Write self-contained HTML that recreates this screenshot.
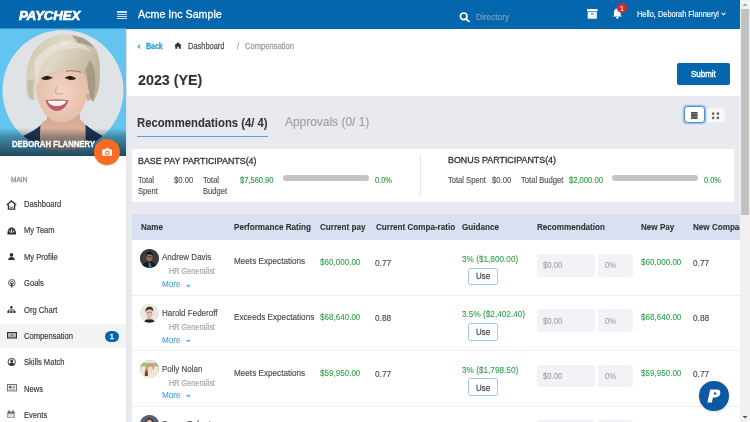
<!DOCTYPE html><html><head><meta charset="utf-8"><style>
html,body{margin:0;padding:0;width:750px;height:422px;overflow:hidden;background:#fff;font-family:"Liberation Sans",sans-serif}
.t{position:absolute;white-space:nowrap;line-height:1;-webkit-text-stroke:0.25px currentColor;will-change:transform}
.r{position:absolute}
</style></head><body>
<div class="r" style="left:126px;top:28px;width:614.00px;height:67.50px;background:#ffffff;"></div>
<div class="r" style="left:126px;top:95.5px;width:614.00px;height:326.50px;background:#e9eaf0;"></div>
<div class="r" style="left:0px;top:28px;width:126.00px;height:394.00px;background:#ffffff;"></div>
<div class="r" style="left:125.8px;top:28px;width:0.80px;height:394.00px;background:#e2e3e8;"></div>
<div class="r" style="left:0px;top:0px;width:740.00px;height:28.80px;background:#0467ae;"></div>
<div class="t" style="left:19.00px;top:8.83px;font-size:13.2px;color:#fff;font-weight:bold;font-style:italic;letter-spacing:-0.1px;-webkit-text-stroke:0.7px #fff;">PAYCHEX</div>
<div class="r" style="left:116.5px;top:10.5px;width:10.00px;height:1.00px;background:#d3e1ef;"></div>
<div class="r" style="left:116.5px;top:12.3px;width:10.00px;height:1.00px;background:#d3e1ef;"></div>
<div class="r" style="left:116.5px;top:14.1px;width:10.00px;height:1.00px;background:#d3e1ef;"></div>
<div class="r" style="left:116.5px;top:15.9px;width:10.00px;height:1.00px;background:#d3e1ef;"></div>
<div class="r" style="left:116.5px;top:17.7px;width:10.00px;height:1.00px;background:#d3e1ef;"></div>
<div class="t" style="left:138.30px;top:8.64px;font-size:10.7px;color:#fff;font-weight:normal;transform:scaleY(1.1);transform-origin:0 9.06px;">Acme Inc Sample</div>
<svg class="r" style="left:459px;top:12px" width="12" height="10" viewBox="0 0 12 10"><circle cx="4.7" cy="4.3" r="3.3" fill="none" stroke="#fff" stroke-width="1.7"/><path d="M7 6.8 L10 9.6" stroke="#fff" stroke-width="1.9" stroke-linecap="round"/></svg>
<div class="t" style="left:476.00px;top:13.82px;font-size:8.25px;color:#7fa2c6;font-weight:normal;transform:scaleY(1.1);transform-origin:0 6.98px;-webkit-text-stroke:0.1px currentColor;">Directory</div>
<div class="r" style="left:459.6px;top:26px;width:115.40px;height:0.60px;background:#1b6db3;"></div>
<svg class="r" style="left:586.5px;top:9px" width="11" height="10" viewBox="0 0 11 10"><rect x="0" y="0" width="10.5" height="2.4" fill="#fff"/><rect x="0.7" y="3.1" width="9.1" height="6.6" fill="#fff"/><rect x="3.8" y="4.4" width="3" height="1" fill="#0467ae"/></svg>
<svg class="r" style="left:611.5px;top:8px" width="11" height="11" viewBox="0 0 11 11"><path d="M5.3 0.5 C3 0.5 2 2.5 2 4.5 L2 7 L0.6 8.6 L10 8.6 L8.6 7 L8.6 4.5 C8.6 2.5 7.6 0.5 5.3 0.5Z" fill="#fff"/><circle cx="5.3" cy="9.6" r="1.2" fill="#fff"/></svg>
<div class="r" style="left:617.3px;top:3.2px;width:10px;height:10px;border-radius:50%;background:#d42a2a"></div>
<div class="t" style="left:620.40px;top:5.47px;font-size:7px;color:#fff;font-weight:normal;transform:scaleY(1.1);transform-origin:0 5.93px;-webkit-text-stroke:0.1px currentColor;">1</div>
<div class="t" style="left:636.50px;top:11.24px;font-size:7.4px;color:#fff;font-weight:normal;transform:scaleY(1.1);transform-origin:0 6.26px;-webkit-text-stroke:0.12px currentColor;">Hello, Deborah Flannery!</div>
<svg class="r" style="left:721.2px;top:12.1px" width="5" height="4" viewBox="0 0 5 4"><path d="M0.6 0.9 L2.5 2.8 L4.4 0.9" fill="none" stroke="#fff" stroke-width="1.1"/></svg>
<svg class="r" style="left:0;top:0" width="126" height="156" viewBox="0 0 126 156">
<defs>
<clipPath id="pc"><circle cx="63" cy="90.5" r="60.5"/></clipPath>
<linearGradient id="pg" x1="0" y1="0" x2="0" y2="1"><stop offset="0" stop-color="#07202c" stop-opacity="0"/><stop offset="0.3" stop-color="#07202c" stop-opacity="0.35"/><stop offset="1" stop-color="#07202c" stop-opacity="0.75"/></linearGradient>
<radialGradient id="face" cx="0.5" cy="0.5" r="0.6"><stop offset="0" stop-color="#f1d5c4"/><stop offset="0.8" stop-color="#e6c0ab"/><stop offset="1" stop-color="#d9ad96"/></radialGradient>
<linearGradient id="hair" x1="0" y1="0" x2="1" y2="0.5"><stop offset="0" stop-color="#cdc1aa"/><stop offset="0.45" stop-color="#e0d7c6"/><stop offset="1" stop-color="#bfb29a"/></linearGradient>
<linearGradient id="skin2" x1="0" y1="0" x2="0" y2="1"><stop offset="0" stop-color="#c99c82"/><stop offset="0.5" stop-color="#ddb49d"/><stop offset="1" stop-color="#e6c0aa"/></linearGradient>
</defs>
<rect x="0" y="28.5" width="126" height="127.5" fill="#63c4ef"/>
<circle cx="63" cy="90.5" r="60.5" fill="#dfe3e6"/>
<g clip-path="url(#pc)">
 <path d="M10 160 L13 146 C15 140 19 137 24 135.5 C31 132 36.5 129 41 125 L86 125 C90.5 129 96 132 102 135.5 C107 137 111 140 113 146 L116 160Z" fill="#1e3457"/>
 <path d="M47 104 L79 104 L80 119 C82 121 84.5 123 85.5 125.5 C86 135 85 150 84 160 L41 160 C40 150 39.5 135 40.5 125.5 C41.5 123 44 121 47 119Z" fill="url(#skin2)"/>
 <path d="M36 86 C36 70 46.5 62 62 62 C77.5 62 88 70 88 86 C88 106 77.5 122.5 61 122.5 C46 122.5 36 104 36 86Z" fill="url(#face)"/>
 <ellipse cx="88.5" cy="97" rx="2.2" ry="4" fill="#d6a88f"/>
 <path d="M27 97 C25 82 26 64 32 54 C38 43 50 35.5 64 34 C78 33.5 90 40 96 49 C100 57 100.5 70 99.5 82 C99 90 96.5 97 93 102 C90 98 88.5 92 88 86 C87.5 80 86 75 82.6 72.8 C78 69.5 72 68 66 68.5 C59 69.5 53 71.5 48.5 74 C43 77 38.5 81 36.6 86 C36 91 35.7 96 35 100 C31 100 28 99.5 27 97Z" fill="url(#hair)"/>
 <path d="M34 62 C42 48 58 40 76 40 C66 44 56 50 48 58 C42 64 38 72 36.5 82 C35 76 34 68 34 62Z" fill="#ebe4d6" opacity="0.7"/>
 <path d="M60 42 C72 40 84 44 92 52 C84 48 72 47 62 50Z" fill="#efe9de" opacity="0.6"/>
 <path d="M72 35.5 C82 36.5 90 41 94 48 C89 45 83 43 78 43Z" fill="#7a6f5e" opacity="0.5"/>
 <path d="M90 60 C96 68 97 84 93 102 C90 98 88.5 92 88 86 C87.5 80 87 74 85 70Z" fill="#9b8f7b" opacity="0.7"/>
 <path d="M28 80 C27 88 28 95 30 99 L34 99.5 C33 92 33 86 34 80Z" fill="#b9ad97" opacity="0.6"/>
 <path d="M66 71.3 C70 70.2 76 70.6 81 72.3" stroke="#5c4a40" stroke-width="0.9" fill="none" opacity="0.7"/>
 <path d="M41 78.4 C43.5 75.4 48.5 75 52.8 77.6 C50 80.2 44.5 80.8 41 78.4Z" fill="#3a2a22"/><circle cx="47" cy="77.6" r="1.5" fill="#1a100c"/>
 <path d="M64.5 77.6 C68.5 75 73.5 75.4 76.2 78.4 C72.7 80.8 67.5 80.2 64.5 77.6Z" fill="#3a2a22"/><circle cx="70.2" cy="77.6" r="1.5" fill="#1a100c"/>
 <path d="M56.5 87 C56 90 55 92 56 93.2 C58 94.5 61 94.5 63 93.2" stroke="#c89882" stroke-width="0.9" fill="none"/>
 <path d="M45.5 100.2 C52 99.2 62 99.2 68.5 100.2 C67 107 61 111 57 111 C51 110.5 47 106 45.5 100.2Z" fill="#bd5d70"/>
 <path d="M47.5 101 C54 100.5 61 100.5 66.5 101 C65 104.8 60 106 57 106 C52 106 49 104 47.5 101Z" fill="#fbf6f4"/>
</g>
<rect x="0" y="128" width="126" height="28" fill="url(#pg)"/>
</svg>

<div class="t" style="left:11.70px;top:140.86px;font-size:7.73px;color:#fff;font-weight:bold;transform:scaleY(1.1);transform-origin:0 6.54px;">DEBORAH FLANNERY</div>
<div class="r" style="left:93.6px;top:138.6px;width:26.8px;height:26.8px;border-radius:50%;background:#fc6b23;box-shadow:0 1px 2px rgba(0,0,0,.15)"></div>
<svg class="r" style="left:101.8px;top:148px" width="10.5" height="8" viewBox="0 0 10.5 8"><path d="M0.3 1.6 L2.8 1.6 L3.8 0.2 L6.7 0.2 L7.7 1.6 L10.2 1.6 L10.2 7.8 L0.3 7.8Z" fill="#fff"/><circle cx="5.25" cy="4.7" r="2.3" fill="#fc6b23"/><circle cx="5.25" cy="4.7" r="1.2" fill="#fff"/></svg>
<div class="t" style="left:11.30px;top:176.65px;font-size:6.56px;color:#8a8a8a;font-weight:normal;transform:scaleY(1.1);transform-origin:0 5.55px;">MAIN</div>
<div class="r" style="left:0px;top:324px;width:125.80px;height:24.30px;background:#f3f3f4;"></div>
<div class="t" style="left:24.40px;top:200.97px;font-size:7.6px;color:#3a3a3a;font-weight:normal;transform:scaleY(1.1);transform-origin:0 6.43px;-webkit-text-stroke:0.15px currentColor;">Dashboard</div>
<div class="t" style="left:24.40px;top:227.37px;font-size:7.6px;color:#3a3a3a;font-weight:normal;transform:scaleY(1.1);transform-origin:0 6.43px;-webkit-text-stroke:0.15px currentColor;">My Team</div>
<div class="t" style="left:24.40px;top:253.77px;font-size:7.6px;color:#3a3a3a;font-weight:normal;transform:scaleY(1.1);transform-origin:0 6.43px;-webkit-text-stroke:0.15px currentColor;">My Profile</div>
<div class="t" style="left:24.40px;top:280.17px;font-size:7.6px;color:#3a3a3a;font-weight:normal;transform:scaleY(1.1);transform-origin:0 6.43px;-webkit-text-stroke:0.15px currentColor;">Goals</div>
<div class="t" style="left:24.40px;top:306.57px;font-size:7.6px;color:#3a3a3a;font-weight:normal;transform:scaleY(1.1);transform-origin:0 6.43px;-webkit-text-stroke:0.15px currentColor;">Org Chart</div>
<div class="t" style="left:24.40px;top:332.97px;font-size:7.6px;color:#3a3a3a;font-weight:normal;transform:scaleY(1.1);transform-origin:0 6.43px;-webkit-text-stroke:0.15px currentColor;">Compensation</div>
<div class="t" style="left:24.40px;top:359.37px;font-size:7.6px;color:#3a3a3a;font-weight:normal;transform:scaleY(1.1);transform-origin:0 6.43px;-webkit-text-stroke:0.15px currentColor;">Skills Match</div>
<div class="t" style="left:24.40px;top:385.77px;font-size:7.6px;color:#3a3a3a;font-weight:normal;transform:scaleY(1.1);transform-origin:0 6.43px;-webkit-text-stroke:0.15px currentColor;">News</div>
<div class="t" style="left:24.40px;top:412.17px;font-size:7.6px;color:#3a3a3a;font-weight:normal;transform:scaleY(1.1);transform-origin:0 6.43px;-webkit-text-stroke:0.15px currentColor;">Events</div>
<svg class="r" style="left:6px;top:199.5px" width="11" height="10" viewBox="0 0 11 10"><path d="M0.8 5 L5.5 0.9 L10.2 5" fill="none" stroke="#2f2f2f" stroke-width="1.3" stroke-linejoin="miter"/><path d="M2.4 4.6 L2.4 9.2 L8.6 9.2 L8.6 4.6" fill="none" stroke="#2f2f2f" stroke-width="1.3"/><path d="M3.6 6.8 Q5.5 8.6 7.4 6.8" fill="none" stroke="#2f2f2f" stroke-width="0.8"/></svg>
<svg class="r" style="left:6.8px;top:226.8px" width="10" height="8" viewBox="0 0 10 8"><path d="M0.4 7.4 C0.2 3 2.2 0.4 4.6 0.4 C7 0.4 9.2 3 9 7.4Z" fill="#2f2f2f"/><path d="M4.6 2 L4.6 5.6 M2.2 3.4 L3.6 5.6 M7.2 3.4 L5.8 5.6" stroke="#fff" stroke-width="0.9"/></svg>
<svg class="r" style="left:8px;top:252.5px" width="7" height="7.5" viewBox="0 0 7 7.5"><circle cx="3.5" cy="1.9" r="1.8" fill="#2f2f2f"/><path d="M0.2 7.2 C0.2 4.8 1.4 3.9 3.5 3.9 C5.6 3.9 6.8 4.8 6.8 7.2Z" fill="#2f2f2f"/></svg>
<svg class="r" style="left:7.8px;top:278.5px" width="8" height="9" viewBox="0 0 8 9"><circle cx="3.8" cy="3.8" r="3.3" fill="none" stroke="#555" stroke-width="0.9"/><circle cx="3.8" cy="3.8" r="1.6" fill="none" stroke="#555" stroke-width="0.9"/><path d="M3.8 3.8 L3.8 8.6" stroke="#2f2f2f" stroke-width="1.2"/></svg>
<svg class="r" style="left:6.8px;top:305.5px" width="9" height="7.5" viewBox="0 0 9 7.5"><circle cx="4.4" cy="1.3" r="1.2" fill="#2f2f2f"/><path d="M4.4 2 L4.4 4 M1.4 5 L1.4 4 L7.4 4 L7.4 5" fill="none" stroke="#2f2f2f" stroke-width="0.7"/><circle cx="1.4" cy="6" r="1.2" fill="#2f2f2f"/><circle cx="4.4" cy="6" r="1.2" fill="#2f2f2f"/><circle cx="7.4" cy="6" r="1.2" fill="#2f2f2f"/></svg>
<svg class="r" style="left:6.8px;top:332.3px" width="10" height="6.5" viewBox="0 0 10 6.5"><rect x="0.6" y="0.6" width="8.8" height="5.3" fill="none" stroke="#2f2f2f" stroke-width="1.2"/><rect x="1.8" y="1.7" width="6.4" height="3.1" fill="#2f2f2f" opacity="0.55"/><path d="M3.6 2 L2.5 3.25 L3.6 4.5 M6.4 2 L7.5 3.25 L6.4 4.5" fill="none" stroke="#fff" stroke-width="0.8"/></svg>
<svg class="r" style="left:7px;top:358.4px" width="9.5" height="8" viewBox="0 0 9.5 8"><circle cx="4.7" cy="4" r="3.7" fill="none" stroke="#2f2f2f" stroke-width="0.9"/><circle cx="4.7" cy="3" r="1.4" fill="#2f2f2f"/><path d="M2 6.5 C2.6 5 3.6 4.6 4.7 4.6 C5.8 4.6 6.8 5 7.4 6.5 C6 7.8 3.4 7.8 2 6.5Z" fill="#2f2f2f"/></svg>
<svg class="r" style="left:6.6px;top:384.2px" width="10" height="7.5" viewBox="0 0 10 7.5"><rect x="0.5" y="0.5" width="9" height="6.4" fill="none" stroke="#666" stroke-width="0.9"/><rect x="1.8" y="1.8" width="2.8" height="2.4" fill="#666"/><path d="M5.5 2.1 L8.3 2.1 M5.5 3.6 L8.3 3.6 M1.8 5.2 L8.3 5.2" stroke="#666" stroke-width="0.7"/></svg>
<svg class="r" style="left:7.4px;top:409.8px" width="8" height="8.5" viewBox="0 0 8 8.5"><rect x="0.4" y="1.6" width="7.2" height="6.6" fill="#666"/><rect x="1.1" y="3.6" width="5.8" height="4" fill="#ddd"/><path d="M2 0.2 L2 2.4 M6 0.2 L6 2.4" stroke="#444" stroke-width="1"/></svg>
<div class="r" style="left:104.6px;top:331.2px;width:14.4px;height:11px;border-radius:6px;background:#0467ae;box-shadow:0 0 0 1px #fff"></div>
<div class="t" style="left:109.90px;top:333.84px;font-size:6.8px;color:#fff;font-weight:normal;transform:scaleY(1.1);transform-origin:0 5.76px;-webkit-text-stroke:0.3px currentColor;">1</div>
<svg class="r" style="left:136.8px;top:43.6px" width="4" height="5" viewBox="0 0 4 5"><path d="M3.2 0.6 L1 2.5 L3.2 4.4" fill="none" stroke="#2aa3d8" stroke-width="1.1"/></svg>
<div class="t" style="left:145.90px;top:42.85px;font-size:7.03px;color:#2aa3d8;font-weight:bold;transform:scaleY(1.2);transform-origin:0 5.95px;">Back</div>
<svg class="r" style="left:174.1px;top:42px" width="8" height="7" viewBox="0 0 8 7"><path d="M4 0.3 L7.8 3.6 L6.8 3.6 L6.8 6.8 L4.8 6.8 L4.8 4.8 L3.2 4.8 L3.2 6.8 L1.2 6.8 L1.2 3.6 L0.2 3.6Z" fill="#333"/></svg>
<div class="t" style="left:188.40px;top:42.89px;font-size:7.46px;color:#5a5a5a;font-weight:normal;transform:scaleY(1.1);transform-origin:0 6.31px;">Dashboard</div>
<div class="t" style="left:237.00px;top:42.89px;font-size:7.46px;color:#aaa;font-weight:normal;transform:scaleY(1.1);transform-origin:0 6.31px;">/</div>
<div class="t" style="left:244.80px;top:42.77px;font-size:7.6px;color:#a0a0a0;font-weight:normal;transform:scaleY(1.1);transform-origin:0 6.43px;">Compensation</div>
<div class="t" style="left:138.00px;top:73.30px;font-size:14.3px;color:#333;font-weight:bold;-webkit-text-stroke:0.1px currentColor;">2023 (YE)</div>
<div class="r" style="left:676.7px;top:63px;width:53.4px;height:21.8px;border-radius:2px;background:#0467ae"></div>
<div class="t" style="left:690.90px;top:70.85px;font-size:7.97px;color:#fff;font-weight:normal;transform:scaleY(1.05);transform-origin:0 6.75px;-webkit-text-stroke:0.35px currentColor;">Submit</div>
<div class="t" style="left:137.40px;top:117.53px;font-size:11.31px;color:#333;font-weight:bold;transform:scaleY(1.05);transform-origin:0 9.57px;-webkit-text-stroke:0.05px currentColor;">Recommendations (4/ 4)</div>
<div class="r" style="left:137.4px;top:136.1px;width:130.70px;height:1.20px;background:#4fa3e3;"></div>
<div class="t" style="left:285.40px;top:116.99px;font-size:11.94px;color:#a2a2a2;font-weight:normal;transform:scaleY(1.05);transform-origin:0 10.11px;-webkit-text-stroke:0.2px currentColor;">Approvals (0/ 1)</div>
<div class="r" style="left:683.6px;top:106.1px;width:21px;height:17.4px;box-sizing:border-box;border:1.5px solid #4f8ccc;border-radius:3.5px;background:#fff;box-shadow:0 0 1.5px 0.5px #8ab4e0"></div>
<svg class="r" style="left:691px;top:111.8px" width="6.5" height="7.3" viewBox="0 0 6.5 7.3"><rect x="0" y="0" width="6.5" height="7.3" fill="#8a8a8a"/><path d="M0 0.6 H6.5 M0 2.1 H6.5 M0 3.6 H6.5 M0 5.1 H6.5 M0 6.6 H6.5" stroke="#444" stroke-width="0.9"/></svg>
<div class="r" style="left:707px;top:107.6px;width:18.4px;height:14.8px;border-radius:2.5px;background:#f7f7f7"></div>
<svg class="r" style="left:711px;top:111.5px" width="9" height="8" viewBox="0 0 9 8"><circle cx="2.2" cy="1.7" r="1.35" fill="#6a6a6a"/><circle cx="6.9" cy="1.7" r="1.35" fill="#6a6a6a"/><circle cx="2.2" cy="5.9" r="1.35" fill="#6a6a6a"/><circle cx="6.9" cy="5.9" r="1.35" fill="#6a6a6a"/></svg>
<div class="r" style="left:132px;top:148.8px;width:602px;height:53.4px;border-radius:2px;background:#fff"></div>
<div class="t" style="left:138.10px;top:156.50px;font-size:8.86px;color:#333;font-weight:normal;transform:scaleY(1.07);transform-origin:0 7.50px;-webkit-text-stroke:0.3px currentColor;">BASE PAY PARTICIPANTS(4)</div>
<div class="t" style="left:138.10px;top:177.17px;font-size:7.6px;color:#555;font-weight:normal;transform:scaleY(1.18);transform-origin:0 6.43px;-webkit-text-stroke:0.15px currentColor;">Total</div>
<div class="t" style="left:138.10px;top:187.97px;font-size:7.6px;color:#555;font-weight:normal;transform:scaleY(1.18);transform-origin:0 6.43px;-webkit-text-stroke:0.15px currentColor;">Spent</div>
<div class="t" style="left:173.70px;top:177.11px;font-size:7.67px;color:#555;font-weight:normal;transform:scaleY(1.18);transform-origin:0 6.49px;-webkit-text-stroke:0.15px currentColor;">$0.00</div>
<div class="t" style="left:202.50px;top:177.17px;font-size:7.6px;color:#555;font-weight:normal;transform:scaleY(1.18);transform-origin:0 6.43px;-webkit-text-stroke:0.15px currentColor;">Total</div>
<div class="t" style="left:202.50px;top:187.97px;font-size:7.6px;color:#555;font-weight:normal;transform:scaleY(1.18);transform-origin:0 6.43px;-webkit-text-stroke:0.15px currentColor;">Budget</div>
<div class="t" style="left:239.90px;top:177.23px;font-size:7.53px;color:#33a04c;font-weight:normal;transform:scaleY(1.18);transform-origin:0 6.37px;-webkit-text-stroke:0.15px currentColor;">$7,560.90</div>
<div class="r" style="left:282.8px;top:175.1px;width:86.4px;height:5.9px;border-radius:3px;background:#c4c4c4"></div>
<div class="t" style="left:374.80px;top:177.24px;font-size:7.4px;color:#33a04c;font-weight:normal;transform:scaleY(1.15);transform-origin:0 6.26px;-webkit-text-stroke:0.15px currentColor;">0.0%</div>
<div class="r" style="left:419.6px;top:155px;width:0.80px;height:40.70px;background:#e6e6e6;"></div>
<div class="t" style="left:448.00px;top:156.48px;font-size:8.88px;color:#333;font-weight:normal;transform:scaleY(1.07);transform-origin:0 7.52px;-webkit-text-stroke:0.3px currentColor;">BONUS PARTICIPANTS(4)</div>
<div class="t" style="left:448.00px;top:177.08px;font-size:7.59px;color:#555;font-weight:normal;transform:scaleY(1.18);transform-origin:0 6.42px;-webkit-text-stroke:0.15px currentColor;">Total Spent</div>
<div class="t" style="left:492.00px;top:177.01px;font-size:7.67px;color:#555;font-weight:normal;transform:scaleY(1.18);transform-origin:0 6.49px;-webkit-text-stroke:0.15px currentColor;">$0.00</div>
<div class="t" style="left:520.80px;top:177.04px;font-size:7.63px;color:#555;font-weight:normal;transform:scaleY(1.18);transform-origin:0 6.46px;-webkit-text-stroke:0.15px currentColor;">Total Budget</div>
<div class="t" style="left:568.80px;top:177.03px;font-size:7.64px;color:#33a04c;font-weight:normal;transform:scaleY(1.18);transform-origin:0 6.47px;-webkit-text-stroke:0.15px currentColor;">$2,000.00</div>
<div class="r" style="left:612px;top:175px;width:86px;height:6px;border-radius:3px;background:#c4c4c4"></div>
<div class="t" style="left:704.00px;top:177.24px;font-size:7.4px;color:#33a04c;font-weight:normal;transform:scaleY(1.15);transform-origin:0 6.26px;-webkit-text-stroke:0.15px currentColor;">0.0%</div>
<div class="r" style="left:132px;top:214px;width:608px;height:208px;background:#fff;border-radius:2px 0 0 0"></div>
<div class="r" style="left:132px;top:214px;width:608.00px;height:25.60px;background:#d8e0f1;"></div>
<div class="t" style="left:140.70px;top:224.24px;font-size:8.1px;color:#333;font-weight:bold;transform:scaleY(1.1);transform-origin:0 6.86px;-webkit-text-stroke:0.1px currentColor;">Name</div>
<div class="t" style="left:233.50px;top:224.24px;font-size:8.1px;color:#333;font-weight:bold;transform:scaleY(1.1);transform-origin:0 6.86px;-webkit-text-stroke:0.1px currentColor;">Performance Rating</div>
<div class="t" style="left:320.30px;top:224.24px;font-size:8.1px;color:#333;font-weight:bold;transform:scaleY(1.1);transform-origin:0 6.86px;-webkit-text-stroke:0.1px currentColor;">Current pay</div>
<div class="t" style="left:376.00px;top:224.24px;font-size:8.1px;color:#333;font-weight:bold;transform:scaleY(1.1);transform-origin:0 6.86px;-webkit-text-stroke:0.1px currentColor;">Current Compa-ratio</div>
<div class="t" style="left:462.00px;top:224.24px;font-size:8.1px;color:#333;font-weight:bold;transform:scaleY(1.1);transform-origin:0 6.86px;-webkit-text-stroke:0.1px currentColor;">Guidance</div>
<div class="t" style="left:537.00px;top:224.24px;font-size:8.1px;color:#333;font-weight:bold;transform:scaleY(1.1);transform-origin:0 6.86px;-webkit-text-stroke:0.1px currentColor;">Recommendation</div>
<div class="t" style="left:640.90px;top:224.24px;font-size:8.1px;color:#333;font-weight:bold;transform:scaleY(1.1);transform-origin:0 6.86px;-webkit-text-stroke:0.1px currentColor;">New Pay</div>
<div class="t" style="left:692.50px;top:224.24px;font-size:8.1px;color:#333;font-weight:bold;transform:scaleY(1.1);transform-origin:0 6.86px;-webkit-text-stroke:0.1px currentColor;">New Compa-ratio</div>
<div class="r" style="left:140.3px;top:249.05px;width:18.8px;height:18.8px;border-radius:50%;background:#2b2f36;overflow:hidden"><svg width="18.8" height="18.8" viewBox="0 0 20 20" style="display:block"><circle cx="10" cy="10" r="10" fill="#3c3c3e"/><path d="M2 20 C3 15 6 13.5 10 13.5 C14 13.5 17 15 18 20Z" fill="#1a1a1c"/><path d="M9 14.5 L11 14.5 L12.5 20 L9.5 20Z" fill="#2f7fc6"/><ellipse cx="10" cy="8.8" rx="3.3" ry="4.3" fill="#9a6a50"/><path d="M6.4 7.5 C6.2 4.5 8 3 10 3 C12.3 3 13.8 4.5 13.6 7.5 C12.8 6 11.5 5.6 10 5.6 C8.5 5.6 7.2 6 6.4 7.5Z" fill="#111"/><path d="M7.2 8.3 L12.8 8.3" stroke="#222" stroke-width="0.6"/></svg>
</div>
<div class="t" style="left:162.00px;top:254.48px;font-size:8.0px;color:#474747;font-weight:normal;transform:scaleY(1.1);transform-origin:0 6.77px;-webkit-text-stroke:0.12px currentColor;">Andrew Davis</div>
<div class="t" style="left:169.20px;top:268.47px;font-size:7.3px;color:#a3a3a3;font-weight:normal;transform:scaleY(1.15);transform-origin:0 6.18px;-webkit-text-stroke:0.15px currentColor;">HR Generalist</div>
<div class="t" style="left:162.00px;top:281.21px;font-size:8.2px;color:#4a9fe8;font-weight:normal;transform:scaleY(1.15);transform-origin:0 6.94px;-webkit-text-stroke:0.1px currentColor;">More</div>
<svg class="r" style="left:185.6px;top:283.65px" width="5" height="4" viewBox="0 0 5 4"><path d="M0.6 0.8 L2.3 2.5 L4 0.8" fill="none" stroke="#4a9fe8" stroke-width="1.1"/></svg>
<div class="t" style="left:233.50px;top:258.44px;font-size:8.16px;color:#474747;font-weight:normal;transform:scaleY(1.1);transform-origin:0 6.91px;-webkit-text-stroke:0.12px currentColor;">Meets Expectations</div>
<div class="t" style="left:320.30px;top:258.72px;font-size:8.07px;color:#33a04c;font-weight:normal;transform:scaleY(1.1);transform-origin:0 6.83px;-webkit-text-stroke:0.1px currentColor;">$60,000.00</div>
<div class="t" style="left:375.10px;top:258.51px;font-size:8.32px;color:#474747;font-weight:normal;transform:scaleY(1.1);transform-origin:0 7.04px;-webkit-text-stroke:0.12px currentColor;">0.77</div>
<div class="t" style="left:462.00px;top:255.58px;font-size:8.23px;color:#33a04c;font-weight:normal;transform:scaleY(1.1);transform-origin:0 6.97px;-webkit-text-stroke:0.1px currentColor;">3% ($1,800.00)</div>
<div class="r" style="left:468.3px;top:267.85px;width:29.9px;height:17.6px;box-sizing:border-box;border:1.1px solid #9fc5ea;border-radius:2.5px;background:#fff"></div>
<div class="t" style="left:476.30px;top:273.38px;font-size:8.0px;color:#505050;font-weight:normal;transform:scaleY(1.1);transform-origin:0 6.77px;-webkit-text-stroke:0.25px currentColor;">Use</div>
<div class="r" style="left:536.7px;top:254.05px;width:58.7px;height:22.5px;border-radius:3px;background:#f2f3f7"></div>
<div class="r" style="left:597.7px;top:254.05px;width:35.8px;height:22.5px;border-radius:3px;background:#f2f3f7"></div>
<div class="t" style="left:542.90px;top:262.06px;font-size:7.67px;color:#a0a0a0;font-weight:normal;transform:scaleY(1.1);transform-origin:0 6.49px;-webkit-text-stroke:0.1px currentColor;">$0.00</div>
<div class="t" style="left:604.50px;top:262.06px;font-size:7.67px;color:#a0a0a0;font-weight:normal;transform:scaleY(1.1);transform-origin:0 6.49px;-webkit-text-stroke:0.1px currentColor;">0%</div>
<div class="t" style="left:640.90px;top:258.72px;font-size:8.07px;color:#33a04c;font-weight:normal;transform:scaleY(1.1);transform-origin:0 6.83px;-webkit-text-stroke:0.1px currentColor;">$60,000.00</div>
<div class="t" style="left:692.50px;top:258.51px;font-size:8.32px;color:#474747;font-weight:normal;transform:scaleY(1.1);transform-origin:0 7.04px;-webkit-text-stroke:0.12px currentColor;">0.77</div>
<div class="r" style="left:132px;top:295.1px;width:608.00px;height:0.80px;background:#efeff2;"></div>
<div class="r" style="left:140.3px;top:304.30px;width:18.8px;height:18.8px;border-radius:50%;background:#e8e0d8;overflow:hidden"><svg width="18.8" height="18.8" viewBox="0 0 20 20" style="display:block"><circle cx="10" cy="10" r="10" fill="#e9e7e4"/><path d="M4 20 C5 17 7 16 10 16 C13 16 15 17 16 20Z" fill="#222"/><path d="M8.5 13 L11.5 13 L12 16.5 L8 16.5Z" fill="#d9b39c"/><ellipse cx="10" cy="9.5" rx="3.3" ry="4.4" fill="#e0bba3"/><path d="M5.8 8.5 C5.5 4.8 7.5 2.8 10.2 2.8 C13 2.8 14.6 4.8 14.2 8.3 C13.5 6.5 12 5.5 10 5.6 C8.2 5.6 6.8 6.5 5.8 8.5Z" fill="#3a2a22"/><path d="M7.3 9 L9.3 9 M10.7 9 L12.7 9" stroke="#333" stroke-width="0.5"/></svg>
</div>
<div class="t" style="left:162.00px;top:310.08px;font-size:8.0px;color:#474747;font-weight:normal;transform:scaleY(1.1);transform-origin:0 6.77px;-webkit-text-stroke:0.12px currentColor;">Harold Federoff</div>
<div class="t" style="left:169.20px;top:324.07px;font-size:7.3px;color:#a3a3a3;font-weight:normal;transform:scaleY(1.15);transform-origin:0 6.18px;-webkit-text-stroke:0.15px currentColor;">HR Generalist</div>
<div class="t" style="left:162.00px;top:336.81px;font-size:8.2px;color:#4a9fe8;font-weight:normal;transform:scaleY(1.15);transform-origin:0 6.94px;-webkit-text-stroke:0.1px currentColor;">More</div>
<svg class="r" style="left:185.6px;top:338.90px" width="5" height="4" viewBox="0 0 5 4"><path d="M0.6 0.8 L2.3 2.5 L4 0.8" fill="none" stroke="#4a9fe8" stroke-width="1.1"/></svg>
<div class="t" style="left:233.50px;top:314.04px;font-size:8.16px;color:#474747;font-weight:normal;transform:scaleY(1.1);transform-origin:0 6.91px;-webkit-text-stroke:0.12px currentColor;">Exceeds Expectations</div>
<div class="t" style="left:320.30px;top:314.32px;font-size:8.07px;color:#33a04c;font-weight:normal;transform:scaleY(1.1);transform-origin:0 6.83px;-webkit-text-stroke:0.1px currentColor;">$68,640.00</div>
<div class="t" style="left:375.10px;top:314.11px;font-size:8.32px;color:#474747;font-weight:normal;transform:scaleY(1.1);transform-origin:0 7.04px;-webkit-text-stroke:0.12px currentColor;">0.88</div>
<div class="t" style="left:462.00px;top:311.18px;font-size:8.23px;color:#33a04c;font-weight:normal;transform:scaleY(1.1);transform-origin:0 6.97px;-webkit-text-stroke:0.1px currentColor;">3.5% ($2,402.40)</div>
<div class="r" style="left:468.3px;top:323.10px;width:29.9px;height:17.6px;box-sizing:border-box;border:1.1px solid #9fc5ea;border-radius:2.5px;background:#fff"></div>
<div class="t" style="left:476.30px;top:328.98px;font-size:8.0px;color:#505050;font-weight:normal;transform:scaleY(1.1);transform-origin:0 6.77px;-webkit-text-stroke:0.25px currentColor;">Use</div>
<div class="r" style="left:536.7px;top:309.30px;width:58.7px;height:22.5px;border-radius:3px;background:#f2f3f7"></div>
<div class="r" style="left:597.7px;top:309.30px;width:35.8px;height:22.5px;border-radius:3px;background:#f2f3f7"></div>
<div class="t" style="left:542.90px;top:317.66px;font-size:7.67px;color:#a0a0a0;font-weight:normal;transform:scaleY(1.1);transform-origin:0 6.49px;-webkit-text-stroke:0.1px currentColor;">$0.00</div>
<div class="t" style="left:604.50px;top:317.66px;font-size:7.67px;color:#a0a0a0;font-weight:normal;transform:scaleY(1.1);transform-origin:0 6.49px;-webkit-text-stroke:0.1px currentColor;">0%</div>
<div class="t" style="left:640.90px;top:314.32px;font-size:8.07px;color:#33a04c;font-weight:normal;transform:scaleY(1.1);transform-origin:0 6.83px;-webkit-text-stroke:0.1px currentColor;">$68,640.00</div>
<div class="t" style="left:692.50px;top:314.11px;font-size:8.32px;color:#474747;font-weight:normal;transform:scaleY(1.1);transform-origin:0 7.04px;-webkit-text-stroke:0.12px currentColor;">0.88</div>
<div class="r" style="left:132px;top:350.35px;width:608.00px;height:0.80px;background:#efeff2;"></div>
<div class="r" style="left:140.3px;top:359.55px;width:18.8px;height:18.8px;border-radius:50%;background:#c9a27a;overflow:hidden"><svg width="18.8" height="18.8" viewBox="0 0 20 20" style="display:block"><circle cx="10" cy="10" r="10" fill="#ece8df"/><rect x="0" y="3" width="20" height="4" fill="#9aa860" opacity="0.75"/><path d="M4 20 C5 16 7 14.5 10.5 14.5 C14 14.5 16 16 17 20Z" fill="#efe9d6"/><path d="M5 17 C4.5 11 6 5.5 10 4.5 C13.5 4 15.5 6.5 15 10.5 L13.2 10.5 C12.8 7.8 11.2 7 9.6 7.6 C8.2 9 8.2 13 8.6 17Z" fill="#c99a6c"/><path d="M5.2 17 C5.2 14 6 11.5 7.8 10.5 L8.5 17Z" fill="#6a4028"/><ellipse cx="11" cy="10.5" rx="2.8" ry="3.6" fill="#f2dccb"/></svg>
</div>
<div class="t" style="left:162.00px;top:365.68px;font-size:8.0px;color:#474747;font-weight:normal;transform:scaleY(1.1);transform-origin:0 6.77px;-webkit-text-stroke:0.12px currentColor;">Polly Nolan</div>
<div class="t" style="left:169.20px;top:379.67px;font-size:7.3px;color:#a3a3a3;font-weight:normal;transform:scaleY(1.15);transform-origin:0 6.18px;-webkit-text-stroke:0.15px currentColor;">HR Generalist</div>
<div class="t" style="left:162.00px;top:392.41px;font-size:8.2px;color:#4a9fe8;font-weight:normal;transform:scaleY(1.15);transform-origin:0 6.94px;-webkit-text-stroke:0.1px currentColor;">More</div>
<svg class="r" style="left:185.6px;top:394.15px" width="5" height="4" viewBox="0 0 5 4"><path d="M0.6 0.8 L2.3 2.5 L4 0.8" fill="none" stroke="#4a9fe8" stroke-width="1.1"/></svg>
<div class="t" style="left:233.50px;top:369.64px;font-size:8.16px;color:#474747;font-weight:normal;transform:scaleY(1.1);transform-origin:0 6.91px;-webkit-text-stroke:0.12px currentColor;">Meets Expectations</div>
<div class="t" style="left:320.30px;top:369.92px;font-size:8.07px;color:#33a04c;font-weight:normal;transform:scaleY(1.1);transform-origin:0 6.83px;-webkit-text-stroke:0.1px currentColor;">$59,950.00</div>
<div class="t" style="left:375.10px;top:369.71px;font-size:8.32px;color:#474747;font-weight:normal;transform:scaleY(1.1);transform-origin:0 7.04px;-webkit-text-stroke:0.12px currentColor;">0.77</div>
<div class="t" style="left:462.00px;top:366.78px;font-size:8.23px;color:#33a04c;font-weight:normal;transform:scaleY(1.1);transform-origin:0 6.97px;-webkit-text-stroke:0.1px currentColor;">3% ($1,798.50)</div>
<div class="r" style="left:468.3px;top:378.35px;width:29.9px;height:17.6px;box-sizing:border-box;border:1.1px solid #9fc5ea;border-radius:2.5px;background:#fff"></div>
<div class="t" style="left:476.30px;top:384.58px;font-size:8.0px;color:#505050;font-weight:normal;transform:scaleY(1.1);transform-origin:0 6.77px;-webkit-text-stroke:0.25px currentColor;">Use</div>
<div class="r" style="left:536.7px;top:364.55px;width:58.7px;height:22.5px;border-radius:3px;background:#f2f3f7"></div>
<div class="r" style="left:597.7px;top:364.55px;width:35.8px;height:22.5px;border-radius:3px;background:#f2f3f7"></div>
<div class="t" style="left:542.90px;top:373.26px;font-size:7.67px;color:#a0a0a0;font-weight:normal;transform:scaleY(1.1);transform-origin:0 6.49px;-webkit-text-stroke:0.1px currentColor;">$0.00</div>
<div class="t" style="left:604.50px;top:373.26px;font-size:7.67px;color:#a0a0a0;font-weight:normal;transform:scaleY(1.1);transform-origin:0 6.49px;-webkit-text-stroke:0.1px currentColor;">0%</div>
<div class="t" style="left:640.90px;top:369.92px;font-size:8.07px;color:#33a04c;font-weight:normal;transform:scaleY(1.1);transform-origin:0 6.83px;-webkit-text-stroke:0.1px currentColor;">$59,950.00</div>
<div class="t" style="left:692.50px;top:369.71px;font-size:8.32px;color:#474747;font-weight:normal;transform:scaleY(1.1);transform-origin:0 7.04px;-webkit-text-stroke:0.12px currentColor;">0.77</div>
<div class="r" style="left:132px;top:405.6px;width:608.00px;height:0.80px;background:#efeff2;"></div>
<div class="r" style="left:140.3px;top:414.80px;width:18.8px;height:18.8px;border-radius:50%;background:#3b4a5e;overflow:hidden"><svg width="18.8" height="18.8" viewBox="0 0 20 20" style="display:block"><circle cx="10" cy="10" r="10" fill="#56627a"/><path d="M5.5 12 C5 6 7 3 10 3 C13 3 15 6 14.5 12Z" fill="#5a3a2c"/><ellipse cx="10" cy="9" rx="3" ry="4" fill="#d8b09a"/></svg>
</div>
<div class="t" style="left:162.00px;top:421.28px;font-size:8.0px;color:#474747;font-weight:normal;transform:scaleY(1.1);transform-origin:0 6.77px;-webkit-text-stroke:0.12px currentColor;">Susan Roberts</div>
<div class="t" style="left:169.20px;top:435.27px;font-size:7.3px;color:#a3a3a3;font-weight:normal;transform:scaleY(1.15);transform-origin:0 6.18px;-webkit-text-stroke:0.15px currentColor;">HR Generalist</div>
<div class="t" style="left:162.00px;top:448.01px;font-size:8.2px;color:#4a9fe8;font-weight:normal;transform:scaleY(1.15);transform-origin:0 6.94px;-webkit-text-stroke:0.1px currentColor;">More</div>
<svg class="r" style="left:185.6px;top:449.40px" width="5" height="4" viewBox="0 0 5 4"><path d="M0.6 0.8 L2.3 2.5 L4 0.8" fill="none" stroke="#4a9fe8" stroke-width="1.1"/></svg>
<div class="t" style="left:233.50px;top:425.24px;font-size:8.16px;color:#474747;font-weight:normal;transform:scaleY(1.1);transform-origin:0 6.91px;-webkit-text-stroke:0.12px currentColor;">Meets Expectations</div>
<div class="t" style="left:320.30px;top:425.52px;font-size:8.07px;color:#33a04c;font-weight:normal;transform:scaleY(1.1);transform-origin:0 6.83px;-webkit-text-stroke:0.1px currentColor;">$61,000.00</div>
<div class="t" style="left:375.10px;top:425.31px;font-size:8.32px;color:#474747;font-weight:normal;transform:scaleY(1.1);transform-origin:0 7.04px;-webkit-text-stroke:0.12px currentColor;">0.77</div>
<div class="r" style="left:468.3px;top:433.60px;width:29.9px;height:17.6px;box-sizing:border-box;border:1.1px solid #9fc5ea;border-radius:2.5px;background:#fff"></div>
<div class="t" style="left:476.30px;top:440.18px;font-size:8.0px;color:#505050;font-weight:normal;transform:scaleY(1.1);transform-origin:0 6.77px;-webkit-text-stroke:0.25px currentColor;">Use</div>
<div class="r" style="left:536.7px;top:419.80px;width:58.7px;height:22.5px;border-radius:3px;background:#f2f3f7"></div>
<div class="r" style="left:597.7px;top:419.80px;width:35.8px;height:22.5px;border-radius:3px;background:#f2f3f7"></div>
<div class="t" style="left:542.90px;top:428.86px;font-size:7.67px;color:#a0a0a0;font-weight:normal;transform:scaleY(1.1);transform-origin:0 6.49px;-webkit-text-stroke:0.1px currentColor;">$0.00</div>
<div class="t" style="left:604.50px;top:428.86px;font-size:7.67px;color:#a0a0a0;font-weight:normal;transform:scaleY(1.1);transform-origin:0 6.49px;-webkit-text-stroke:0.1px currentColor;">0%</div>
<div class="t" style="left:640.90px;top:425.52px;font-size:8.07px;color:#33a04c;font-weight:normal;transform:scaleY(1.1);transform-origin:0 6.83px;-webkit-text-stroke:0.1px currentColor;">$61,000.00</div>
<div class="t" style="left:692.50px;top:425.31px;font-size:8.32px;color:#474747;font-weight:normal;transform:scaleY(1.1);transform-origin:0 7.04px;-webkit-text-stroke:0.12px currentColor;">0.77</div>
<div class="r" style="left:740px;top:0px;width:10.00px;height:422.00px;background:#f1f1f1;"></div>
<div class="r" style="left:741px;top:9px;width:8.00px;height:206.00px;background:#c1c1c1;"></div>
<svg class="r" style="left:740px;top:0px" width="10" height="10" viewBox="0 0 10 10"><path d="M2.5 6 L5 3.5 L7.5 6Z" fill="#a3a3a3"/></svg>
<svg class="r" style="left:740px;top:412px" width="10" height="10" viewBox="0 0 10 10"><path d="M2.5 4 L5 6.5 L7.5 4Z" fill="#505050"/></svg>
<div class="r" style="left:699.4px;top:381.2px;width:29.4px;height:29.4px;border-radius:50%;background:#0b58a4;box-shadow:0 0 0 0.8px #fbf3ea,0 1px 2px rgba(0,0,0,.2)"></div>
<svg class="r" style="left:706px;top:389px" width="16" height="14" viewBox="0 0 16 14"><path d="M4.2 0.6 L10.6 0.6 C13.6 0.6 14.8 2.2 14.3 4.6 C13.8 7.2 11.8 8.6 8.8 8.6 L6.9 8.6 L5.9 13.4 L1.4 13.4Z M7.6 5.4 L8.9 5.4 C9.8 5.4 10.3 5 10.45 4.4 C10.6 3.8 10.3 3.6 9.5 3.6 L8 3.6Z" fill="#fff" fill-rule="evenodd"/></svg>
</body></html>
